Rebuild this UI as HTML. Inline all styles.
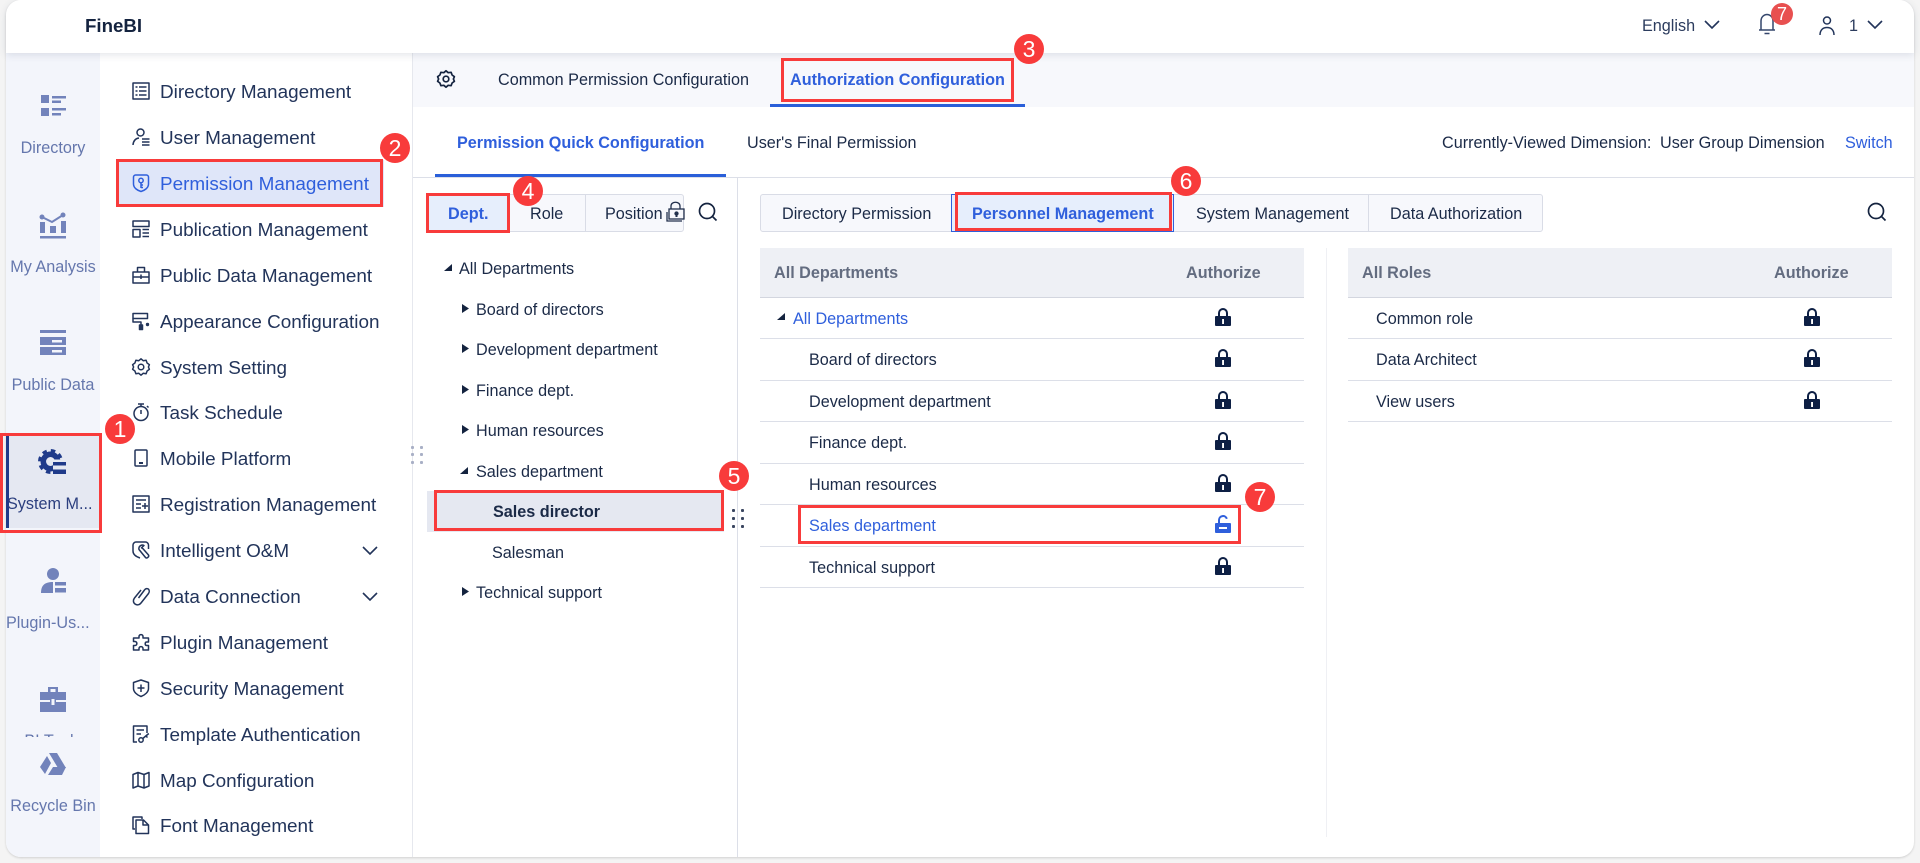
<!DOCTYPE html>
<html lang="en"><head><meta charset="utf-8"><title>FineBI</title>
<style>
html,body{margin:0;padding:0;width:1920px;height:863px;overflow:hidden;background:#f4f4f4;font-family:"Liberation Sans",Arial,sans-serif;color:#1b2a47}
#f{position:absolute;left:6px;top:0;width:1908px;height:857px;background:#fff;border-radius:15px;box-shadow:0 1px 2px #cfcfcf;overflow:hidden}
#p{position:absolute;left:0;top:0;width:1920px;height:863px;overflow:hidden}
.b{position:absolute}
.t{position:absolute;white-space:nowrap;line-height:20px;font-size:16.2px;margin-top:1px}
.m{position:absolute;left:160px;white-space:nowrap;line-height:22px;font-size:18.9px;color:#22345a;margin-top:2px}
.r{position:absolute;white-space:nowrap;line-height:20px;font-size:16.2px;color:#6577ad;text-align:center;left:6px;width:94px;margin-top:1px}
.bold{font-weight:700}
.blue{color:#2f5fdc}
.g{color:#636c80;font-weight:700}
.red{position:absolute;border:3px solid #f83b3b;box-sizing:border-box;z-index:5}
.n{position:absolute;width:30px;height:30px;border-radius:50%;background:#f83b3b;color:#fff;text-align:center;line-height:30px;font-size:23px;z-index:6}
svg{position:absolute;overflow:visible}
.i{width:18px;height:18px;left:132px;fill:none;stroke:#22345a;stroke-width:1.5;stroke-linejoin:round}
.s{fill:#7283bb;stroke:none;width:26px;height:26px;left:40px}
.l{width:16px;height:18px;fill:#0d1f44}
.h{position:absolute;background:#dcdfe8;height:1px}
.d{position:absolute;width:2.5px;height:3px;background:#a9b0c6;border-radius:1px}
.dk{background:#3a4660}
.tri{width:9px;height:9px;fill:#14233f}
</style></head><body>
<div id="f"></div>
<div id="p">
<svg width="0" height="0" style="position:absolute"><defs>
<g id="lk"><path d="M4 9V5a4 4 0 0 1 8 0v4" fill="none" stroke="#0d1f44" stroke-width="2"/><rect y="8" width="16" height="10" rx="1"/><rect x="7.100" y="11" width="1.900" height="5" fill="#fff"/></g>
</defs></svg>
<!-- header -->
<div class="b" style="left:6px;top:0;width:1908px;height:53px;box-shadow:0 2px 8px rgba(60,70,100,.14);z-index:3;border-radius:15px 15px 0 0;background:#fff"></div>
<div class="t bold" style="left:85px;top:15px;font-size:18.7px;color:#14233f;z-index:4">FineBI</div>
<div style="position:absolute;z-index:4;left:0;top:0">
<div class="t" style="left:1642px;top:15px;color:#2c3c5e">English</div>
<svg style="left:1704px;top:20px;width:16px;height:10px;fill:none;stroke:#22345a;stroke-width:1.6"><path d="M1 1l7 7 7-7"/></svg>
<svg style="left:1758px;top:13px;width:18px;height:22px;fill:none;stroke:#34466c;stroke-width:1.5"><path d="M1 17h16M3 17V8c0-4 3-6.500 6-6.500S15 4 15 8v9M6.500 20.500h5"/></svg>
<div class="b" style="left:1771px;top:3px;width:22px;height:22px;border-radius:50%;background:#e85050;color:#fff;text-align:center;line-height:22px;font-size:18px">7</div>
<svg style="left:1819px;top:16px;width:16px;height:20px;fill:none;stroke:#22345a;stroke-width:1.5"><circle cx="8" cy="4.500" r="3.500"/><path d="M1 19c0-5 3-7.500 7-7.500s7 2.500 7 7.500"/></svg>
<div class="t" style="left:1849px;top:15px;color:#2c3c5e">1</div>
<svg style="left:1867px;top:20px;width:16px;height:10px;fill:none;stroke:#22345a;stroke-width:1.6"><path d="M1 1l7 7 7-7"/></svg>
</div>
<!-- rail -->
<div class="b" style="left:6px;top:53px;width:94px;height:804px;background:#f3f5fb;border-radius:0 0 0 15px"></div>
<div class="b" style="left:6px;top:435px;width:94px;height:93px;background:#e5e8f2"></div>
<div class="b" style="left:6px;top:435px;width:3px;height:93px;background:#1f3a8a"></div>
<svg class="s" style="top:93px" viewBox="0 0 26 26"><path d="M1 2h8v8H1zM12 3h14v2.500H12zM12 7.500h9V10h-9zM1 15h8v8H1zM12 15h14v2.500H12zM12 20h9v2.500h-9z"/></svg>
<div class="r" style="top:137px">Directory</div>
<svg class="s" style="top:213px" viewBox="0 0 26 26"><path d="M0 23h26v2.500H0zM0 9h5v11H0zM10 13h6v7h-6zM21 8h5v12h-5z"/><path d="M2 4l10 5 11-7" fill="none" stroke="#7283bb" stroke-width="2"/><circle cx="2" cy="4" r="2.500"/><circle cx="23" cy="2" r="2.500"/></svg>
<div class="r" style="top:256px">My Analysis</div>
<svg class="s" style="top:330px" viewBox="0 0 26 26"><path d="M0 0h26v3H0zM0 7h26v8H0zM0 17h26v8H0z"/><path d="M12 10h10v2.500H12zM12 20h10v2.500H12z" fill="#f3f5fb"/></svg>
<div class="r" style="top:374px">Public Data</div>
<svg class="s" style="top:449px;fill:#1f3a8a" viewBox="0 0 26 26"><circle cx="10.500" cy="12.500" r="7.200" fill="none" stroke="#1f3a8a" stroke-width="5.500"/><circle cx="10.500" cy="12.500" r="11" fill="none" stroke="#1f3a8a" stroke-width="3" stroke-dasharray="4.500 4.140"/><rect x="13" y="10.500" width="14" height="16" fill="#e5e8f2"/><path d="M13 13h13v3.500H13zM13 20.500h13V25H13z"/></svg>
<div class="r" style="top:493px;color:#2c3f7f;left:7px;width:88px;text-align:left">System M...</div>
<svg class="s" style="top:568px" viewBox="0 0 26 26"><circle cx="13" cy="6" r="6"/><path d="M1 25c0-8 4-11 12-11v11zM15 14h11v3.500H15zM15 20h11v4.500H15z"/></svg>
<div class="r" style="top:612px;left:6px;width:86px;text-align:left">Plugin-Us...</div>
<svg class="s" style="top:687px" viewBox="0 0 26 26"><path d="M8 0h10v5h8v8H0V5h8zM10.500 2v3h5V2zM0 15h10v-2h6v2h10v10H0z"/><path d="M11.500 12h3v6h-3z" fill="#f3f5fb"/></svg>
<div class="b" style="left:6px;top:729px;width:94px;height:8px;overflow:hidden"><div class="r" style="top:1px;left:0;width:94px">BI Tools</div></div>
<svg class="s" style="top:752px" viewBox="0 0 26 24"><path d="M9 0h8l9 15h-8zM7 3l4 7-6 11L0 14zM8 22l5-8h13l-4 8z"/></svg>
<div class="r" style="top:795px">Recycle Bin</div>
<!-- menu border -->
<div class="b" style="left:412px;top:53px;width:1px;height:804px;background:#e6e8ee"></div>
<!-- menu -->
<div class="b" style="left:116px;top:160px;width:268px;height:47px;background:#dfe6f9"></div>
<div class="m" style="top:80px">Directory Management</div>
<div class="m" style="top:126px">User Management</div>
<div class="m blue" style="top:172px">Permission Management</div>
<div class="m" style="top:218px">Publication Management</div>
<div class="m" style="top:264px">Public Data Management</div>
<div class="m" style="top:310px">Appearance Configuration</div>
<div class="m" style="top:356px">System Setting</div>
<div class="m" style="top:401px">Task Schedule</div>
<div class="m" style="top:447px">Mobile Platform</div>
<div class="m" style="top:493px">Registration Management</div>
<div class="m" style="top:539px">Intelligent O&amp;M</div>
<div class="m" style="top:585px">Data Connection</div>
<div class="m" style="top:631px">Plugin Management</div>
<div class="m" style="top:677px">Security Management</div>
<div class="m" style="top:723px">Template Authentication</div>
<div class="m" style="top:769px">Map Configuration</div>
<div class="m" style="top:814px">Font Management</div>
<svg class="i" style="top:82px" viewBox="0 0 18 18"><rect x="1" y="1" width="16" height="16"/><path d="M3.500 5h2M7 5h7.500M3.500 9h2M7 9h7.500M3.500 13h2M7 13h7.500"/></svg>
<svg class="i" style="top:128px" viewBox="0 0 18 18"><circle cx="8.500" cy="4.500" r="3.500"/><path d="M1 17c.3-4 2.500-6.500 6-7M10 11h7.500M10 14h7.500M10 17h7.500"/></svg>
<svg class="i" style="top:174px;stroke:#2f5fdc" viewBox="0 0 18 18"><path d="M3.500 1h11c1 0 2 1 2 2v7c0 4-4 6.500-7.500 7.500C5.500 16.500 1.500 14 1.500 10V3c0-1 1-2 2-2z"/><circle cx="9" cy="6.500" r="2.200"/><path d="M9 8.700V14M9 11h2M9 13.500h2"/></svg>
<svg class="i" style="top:220px" viewBox="0 0 18 18"><rect x="1" y="1" width="16" height="5.500"/><rect x="1" y="9.500" width="7" height="7.500"/><path d="M10.500 9.500H17M10.500 13H17M10.500 16.500H17"/></svg>
<svg class="i" style="top:266px" viewBox="0 0 18 18"><rect x="1" y="6" width="16" height="11"/><path d="M5.500 6V1.500h7V6M1 11h16M9 8.500V13"/></svg>
<svg class="i" style="top:312px" viewBox="0 0 18 18"><rect x="1" y="1.500" width="14.500" height="5"/><path d="M1 6.500V10h8v3"/><rect x="7.500" y="13" width="3" height="4.500" fill="#22345a"/><circle cx="15.500" cy="12.500" r="1.700" fill="#22345a" stroke="none"/></svg>
<svg class="i" style="top:358px" viewBox="0 0 18 18"><path d="M9 .8l2.200 1.900 2.900-.4 1 2.700 2.300 1.700-1 2.300 1 2.300-2.300 1.700-1 2.700-2.900-.4L9 17.200l-2.200-1.900-2.900.4-1-2.700-2.300-1.700 1-2.300-1-2.300 2.300-1.700 1-2.700 2.900.4z"/><circle cx="9" cy="9" r="2.800"/></svg>
<svg class="i" style="top:403px" viewBox="0 0 18 18"><circle cx="9" cy="10.500" r="7"/><path d="M6 1h6M9 1v2.500M15 3l1.500 1.500M9 7v4"/></svg>
<svg class="i" style="top:449px" viewBox="0 0 18 18"><rect x="3" y="1" width="12" height="16" rx="1"/><path d="M7 14h4" stroke-width="2"/></svg>
<svg class="i" style="top:495px" viewBox="0 0 18 18"><rect x="1" y="1" width="16" height="16"/><path d="M4 5h10M4 9h5M4 13h5M13 8v6M10 11h6"/></svg>
<svg class="i" style="top:541px" viewBox="0 0 18 18"><path d="M16.500 8V4c0-1.500-1.500-3-3-3H4C2.500 1 1 2.500 1 4v6c0 3 2.500 5.500 7 7"/><path d="M12 4.500a3.500 3.500 0 0 0-5 4l6.500 8c1.200 1.300 4-.7 3-2.500L11 7.800l-1.500-1z"/></svg>
<svg class="i" style="top:587px" viewBox="0 0 18 18"><path d="M6.500 11l6-8c1-1.500 3-1.800 4-.8s1 2.800 0 4.300l-7.500 9.500c-1.500 2-4 2.500-6 1s-2-4-.5-6L9 3"/></svg>
<svg class="i" style="top:633px" viewBox="0 0 18 18"><path d="M7 3.500C7 1 11 1 11 3.500V5h5.500v4h-1.800c-2 0-2 3.500 0 3.500h1.800v4.500H11v-1.500c0-2.500-4-2.500-4 0V17H1.500v-4.500H3c2.500 0 2.500-4 0-4H1.500V5H7z"/></svg>
<svg class="i" style="top:679px" viewBox="0 0 18 18"><path d="M9 1l7.500 2.500v6c0 3.500-3.500 6.500-7.500 8-4-1.500-7.500-4.500-7.500-8v-6z"/><path d="M9 5.500v7.500M5.500 9h7"/></svg>
<svg class="i" style="top:725px" viewBox="0 0 18 18"><path d="M5 17H1.500V1H15v7M4.500 5H12M4.500 9H9"/><circle cx="9" cy="15" r="2.200"/><path d="M10.800 13.500l6-5M14 11l1.500 1.500"/></svg>
<svg class="i" style="top:771px" viewBox="0 0 18 18"><path d="M1 3.500l5-2 6 2 5-2V15l-5 2-6-2-5 2zM6 1.500V15M12 3.500V17"/></svg>
<svg class="i" style="top:816px" viewBox="0 0 18 18"><path d="M3 13H1V1h9v2"/><path d="M4 4h7.500l5 5v8.500H4zM11 4v5h5.500"/></svg>
<svg style="left:362px;top:546px;width:16px;height:10px;fill:none;stroke:#22345a;stroke-width:1.6"><path d="M1 1l7 7 7-7"/></svg>
<svg style="left:362px;top:592px;width:16px;height:10px;fill:none;stroke:#22345a;stroke-width:1.6"><path d="M1 1l7 7 7-7"/></svg>
<!-- tabs -->
<div class="b" style="left:413px;top:53px;width:1501px;height:54px;background:#f7f8fc"></div>
<svg class="i" style="left:437px;top:70px;stroke:#14233f;stroke-width:1.7" viewBox="0 0 18 18"><path d="M9 .8l2.200 1.900 2.900-.4 1 2.700 2.300 1.700-1 2.300 1 2.300-2.300 1.700-1 2.700-2.900-.4L9 17.200l-2.200-1.900-2.900.4-1-2.700-2.300-1.700 1-2.300-1-2.300 2.300-1.700 1-2.700 2.900.4z"/><circle cx="9" cy="9" r="2.800"/></svg>
<div class="t" style="left:498px;top:69px">Common Permission Configuration</div>
<div class="t bold blue" style="left:790px;top:69px">Authorization Configuration</div>
<div class="b" style="left:770px;top:104px;width:255px;height:3px;background:#2a5fd9"></div>
<div class="t bold blue" style="left:457px;top:132px">Permission Quick Configuration</div>
<div class="t" style="left:747px;top:132px">User's Final Permission</div>
<div class="b" style="left:435px;top:174px;width:291px;height:3px;background:#2a5fd9"></div>
<div class="h" style="left:413px;top:177px;width:1501px"></div>
<div class="t" style="left:1442px;top:132px">Currently-Viewed Dimension:</div>
<div class="t" style="left:1660px;top:132px">User Group Dimension</div>
<div class="t blue" style="left:1845px;top:132px">Switch</div>
<div class="b" style="left:737px;top:178px;width:1px;height:679px;background:#dcdfe8"></div>
<!-- dept tabs -->
<div class="b" style="left:428px;top:194px;width:256px;height:38px;background:#f7f8fc;border:1px solid #d9dce6;border-radius:3px;box-sizing:border-box"></div>
<div class="b" style="left:428px;top:194px;width:82px;height:38px;background:#e6eefc"></div>
<div class="b" style="left:585px;top:194px;width:1px;height:38px;background:#d9dce6"></div>
<div class="t bold blue" style="left:448px;top:203px">Dept.</div>
<div class="t" style="left:530px;top:203px">Role</div>
<div class="t" style="left:605px;top:203px">Position</div>
<svg class="b" style="left:666px;top:201px;width:19px;height:22px;fill:none;stroke:#22304c;stroke-width:1.3" viewBox="0 0 19 22"><path d="M5 8V5c0-5 9-5 9 0v3"/><rect x="3" y="8" width="15" height="10"/><path d="M1 11v9h15"/><circle cx="10.500" cy="12.500" r="1.500" fill="#22304c"/><path d="M10.500 13v3" stroke-width="2"/></svg>
<svg class="b" style="left:698px;top:202px;width:20px;height:20px;fill:none;stroke:#14233f;stroke-width:1.7"><circle cx="9" cy="9" r="7.500"/><path d="M14 14l4.500 4.500"/></svg>
<!-- tree -->
<div class="b" style="left:427px;top:491px;width:297px;height:41px;background:#e5e8f1"></div>
<svg class="tri" style="left:444px;top:263px" viewBox="0 0 9 9"><path d="M8 1v7H0z"/></svg>
<div class="t" style="left:459px;top:258px">All Departments</div>
<svg class="tri" style="left:461px;top:304px" viewBox="0 0 9 9"><path d="M1 0l7 4.500L1 9z"/></svg>
<div class="t" style="left:476px;top:299px">Board of directors</div>
<svg class="tri" style="left:461px;top:344px" viewBox="0 0 9 9"><path d="M1 0l7 4.500L1 9z"/></svg>
<div class="t" style="left:476px;top:339px">Development department</div>
<svg class="tri" style="left:461px;top:385px" viewBox="0 0 9 9"><path d="M1 0l7 4.500L1 9z"/></svg>
<div class="t" style="left:476px;top:380px">Finance dept.</div>
<svg class="tri" style="left:461px;top:425px" viewBox="0 0 9 9"><path d="M1 0l7 4.500L1 9z"/></svg>
<div class="t" style="left:476px;top:420px">Human resources</div>
<svg class="tri" style="left:460px;top:466px" viewBox="0 0 9 9"><path d="M8 1v7H0z"/></svg>
<div class="t" style="left:476px;top:461px">Sales department</div>
<div class="t bold" style="left:493px;top:501px">Sales director</div>
<div class="t" style="left:492px;top:542px">Salesman</div>
<svg class="tri" style="left:461px;top:587px" viewBox="0 0 9 9"><path d="M1 0l7 4.500L1 9z"/></svg>
<div class="t" style="left:476px;top:582px">Technical support</div>
<!-- drag dots -->
<div class="d" style="left:411px;top:446px"></div><div class="d" style="left:420px;top:446px"></div>
<div class="d" style="left:411px;top:453px"></div><div class="d" style="left:420px;top:453px"></div>
<div class="d" style="left:411px;top:461px"></div><div class="d" style="left:420px;top:461px"></div>
<div class="d dk" style="left:732px;top:509px"></div><div class="d dk" style="left:741px;top:509px"></div>
<div class="d dk" style="left:732px;top:517px"></div><div class="d dk" style="left:741px;top:517px"></div>
<div class="d dk" style="left:732px;top:525px"></div><div class="d dk" style="left:741px;top:525px"></div>
<!-- perm tabs -->
<div class="b" style="left:760px;top:194px;width:783px;height:38px;background:#f7f8fc;border:1px solid #d9dce6;border-radius:3px;box-sizing:border-box"></div>
<div class="b" style="left:951px;top:194px;width:223px;height:38px;background:#e6eefc;border:1px solid #2f5fdc;box-sizing:border-box"></div>
<div class="b" style="left:1368px;top:194px;width:1px;height:38px;background:#d9dce6"></div>
<div class="t" style="left:782px;top:203px">Directory Permission</div>
<div class="t bold blue" style="left:972px;top:203px">Personnel Management</div>
<div class="t" style="left:1196px;top:203px">System Management</div>
<div class="t" style="left:1390px;top:203px">Data Authorization</div>
<svg class="b" style="left:1867px;top:202px;width:20px;height:20px;fill:none;stroke:#14233f;stroke-width:1.7"><circle cx="9" cy="9" r="7.500"/><path d="M14 14l4.500 4.500"/></svg>
<!-- table left -->
<div class="b" style="left:760px;top:248px;width:544px;height:49px;background:#eef0f5;border-bottom:1px solid #d3d6df;box-sizing:content-box"></div>
<div class="t g" style="left:774px;top:262px">All Departments</div>
<div class="t g" style="left:1186px;top:262px">Authorize</div>
<div class="h" style="left:760px;top:338px;width:544px"></div>
<div class="h" style="left:760px;top:380px;width:544px"></div>
<div class="h" style="left:760px;top:421px;width:544px"></div>
<div class="h" style="left:760px;top:463px;width:544px"></div>
<div class="h" style="left:760px;top:504px;width:544px"></div>
<div class="h" style="left:760px;top:546px;width:544px"></div>
<div class="h" style="left:760px;top:587px;width:544px"></div>
<svg class="tri" style="left:777px;top:312px" viewBox="0 0 9 9"><path d="M8 1v7H0z"/></svg>
<div class="t blue" style="left:793px;top:308px">All Departments</div>
<div class="t" style="left:809px;top:349px">Board of directors</div>
<div class="t" style="left:809px;top:391px">Development department</div>
<div class="t" style="left:809px;top:432px">Finance dept.</div>
<div class="t" style="left:809px;top:474px">Human resources</div>
<div class="t blue" style="left:809px;top:515px">Sales department</div>
<div class="t" style="left:809px;top:557px">Technical support</div>
<svg class="l" style="left:1215px;top:308px" viewBox="0 0 16 18"><use href="#lk"/></svg>
<svg class="l" style="left:1215px;top:349px" viewBox="0 0 16 18"><use href="#lk"/></svg>
<svg class="l" style="left:1215px;top:391px" viewBox="0 0 16 18"><use href="#lk"/></svg>
<svg class="l" style="left:1215px;top:432px" viewBox="0 0 16 18"><use href="#lk"/></svg>
<svg class="l" style="left:1215px;top:474px" viewBox="0 0 16 18"><use href="#lk"/></svg>
<svg class="l" style="left:1215px;top:515px;fill:#2f5fdc" viewBox="0 0 16 18"><path d="M4 9V5a4 4 0 0 1 7.800-1.200" fill="none" stroke="#2f5fdc" stroke-width="2"/><rect y="8" width="16" height="10" rx="1"/><rect x="4" y="12" width="8" height="2" fill="#fff"/></svg>
<svg class="l" style="left:1215px;top:557px" viewBox="0 0 16 18"><use href="#lk"/></svg>
<div class="b" style="left:1326px;top:248px;width:1px;height:589px;background:#eff0f4"></div>
<!-- table right -->
<div class="b" style="left:1348px;top:248px;width:544px;height:49px;background:#eef0f5;border-bottom:1px solid #d3d6df"></div>
<div class="t g" style="left:1362px;top:262px">All Roles</div>
<div class="t g" style="left:1774px;top:262px">Authorize</div>
<div class="h" style="left:1348px;top:338px;width:544px"></div>
<div class="h" style="left:1348px;top:380px;width:544px"></div>
<div class="h" style="left:1348px;top:421px;width:544px"></div>
<div class="t" style="left:1376px;top:308px">Common role</div>
<div class="t" style="left:1376px;top:349px">Data Architect</div>
<div class="t" style="left:1376px;top:391px">View users</div>
<svg class="l" style="left:1804px;top:308px" viewBox="0 0 16 18"><use href="#lk"/></svg>
<svg class="l" style="left:1804px;top:349px" viewBox="0 0 16 18"><use href="#lk"/></svg>
<svg class="l" style="left:1804px;top:391px" viewBox="0 0 16 18"><use href="#lk"/></svg>
<!-- annotations -->
<div class="red" style="left:0;top:433px;width:102px;height:100px"></div>
<div class="n" style="left:105px;top:414px">1</div>
<div class="red" style="left:116px;top:159px;width:267px;height:48px"></div>
<div class="n" style="left:380px;top:133px">2</div>
<div class="red" style="left:781px;top:58px;width:233px;height:44px"></div>
<div class="n" style="left:1014px;top:34px">3</div>
<div class="red" style="left:426px;top:193px;width:84px;height:40px"></div>
<div class="n" style="left:513px;top:176px">4</div>
<div class="red" style="left:434px;top:490px;width:290px;height:41px"></div>
<div class="n" style="left:719px;top:461px">5</div>
<div class="red" style="left:955px;top:192px;width:217px;height:39px"></div>
<div class="n" style="left:1171px;top:166px">6</div>
<div class="red" style="left:798px;top:505px;width:443px;height:39px"></div>
<div class="n" style="left:1245px;top:482px">7</div>
</div>
</body></html>
